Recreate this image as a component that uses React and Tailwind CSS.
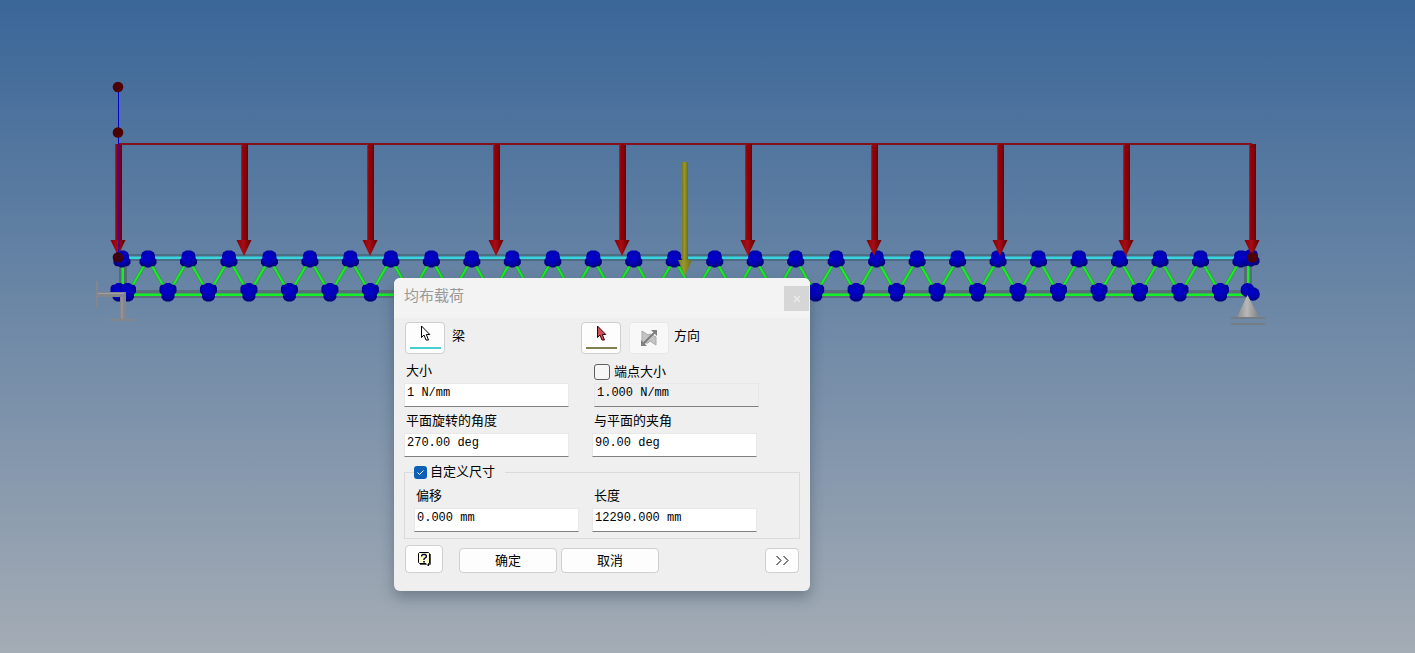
import React from "react";

const topNodes = Array.from({ length: 28 }, (_, i) => 148 + i * 40.48);
const bottomNodes = Array.from({ length: 28 }, (_, i) => 127.5 + i * 40.48);
const loads = Array.from({ length: 10 }, (_, i) => 118 + i * 126);

function TopNode({ x, y = 259 }) {
  return (
    <path
      transform={`translate(${x} ${y})`}
      d="M-2.500 -8.500H2.500L6 -6.500L7 -3V-1L8.500 1V4.500L6.500 7L3 7.500L1.500 8.500H-1.500L-3 7.500L-6.500 7L-8.500 4.500V1L-7 -1V-3L-6 -6.500Z"
      fill="url(#ball)"
    />
  );
}

function BottomNode({ x, y = 292 }) {
  return (
    <path
      transform={`translate(${x} ${y})`}
      d="M-2 -9H2L4 -7.500L7 -7L8.500 -4.500V0L6.500 2.500V5.500L5 8L2 9.500H-2L-5 8L-6.500 5.500V2.500L-8.500 0V-4.500L-7 -7L-4 -7.500Z"
      fill="url(#ball)"
    />
  );
}

function ArrowHead({ x }) {
  return <path d={`M${x - 7.5} 240H${x + 7.5}L${x} 256Z`} fill="url(#head)" />;
}

function Scene() {
  return (
    <svg
      viewBox="0 0 1415 653"
      preserveAspectRatio="xMinYMin meet"
      className="absolute inset-0 w-full"
      aria-hidden="true"
    >
      <defs>
        <radialGradient id="ball" cx="0.45" cy="0.4" r="0.6">
          <stop offset="0" stopColor="#0000d0" />
          <stop offset="0.6" stopColor="#0000b4" />
          <stop offset="1" stopColor="#000078" />
        </radialGradient>
        <linearGradient id="shaft">
          <stop offset="0" stopColor="#a82830" />
          <stop offset="0.25" stopColor="#940004" />
          <stop offset="0.7" stopColor="#840004" />
          <stop offset="1" stopColor="#600410" />
        </linearGradient>
        <linearGradient id="head">
          <stop offset="0" stopColor="#840004" />
          <stop offset="0.45" stopColor="#a80c14" />
          <stop offset="1" stopColor="#600004" />
        </linearGradient>
        <linearGradient id="olive">
          <stop offset="0" stopColor="#77771c" />
          <stop offset="0.4" stopColor="#98982a" />
          <stop offset="1" stopColor="#6c6c1c" />
        </linearGradient>
        <linearGradient id="cone">
          <stop offset="0" stopColor="#8c8c90" />
          <stop offset="0.45" stopColor="#b8b8b8" />
          <stop offset="1" stopColor="#808084" />
        </linearGradient>
      </defs>

      {/* chords and end posts */}
      <rect x="120" y="254" width="1130" height="7" fill="#4c6e84" />
      <rect x="120" y="256.500" width="1130" height="2.500" fill="#38d4e0" />
      <rect x="120" y="290" width="1130" height="8" fill="#5a6e7c" />
      <rect x="120" y="293.500" width="1130" height="2.500" fill="#14f028" />
      <rect x="119" y="262" width="8" height="28" fill="#546c74" />
      <rect x="121.500" y="262" width="2.500" height="28" fill="#14f028" />
      <rect x="1244" y="262" width="8" height="28" fill="#546c74" />
      <rect x="1247" y="262" width="2.500" height="28" fill="#14f028" />

      {/* diagonals */}
      {topNodes.map((x, i) => (
        <g key={i}>
          <path d={`M${bottomNodes[i]} 294L${x} 259`} stroke="#3c8a50" strokeWidth="3.400" />
          <path d={`M${bottomNodes[i]} 294L${x} 259`} stroke="#14f020" strokeWidth="2.200" />
          {i < 27 && (
            <>
              <path d={`M${x} 259L${bottomNodes[i + 1]} 294`} stroke="#3c8a50" strokeWidth="3.400" />
              <path d={`M${x} 259L${bottomNodes[i + 1]} 294`} stroke="#14f020" strokeWidth="2.200" />
            </>
          )}
        </g>
      ))}

      <rect x="118" y="143" width="1134" height="2" fill="#84101c" />
      {loads.map((x) => (
        <rect key={x} x={x - 3} y="144" width="7" height="97" fill="url(#shaft)" />
      ))}

      <TopNode x={122} />
      {topNodes.map((x, i) => (
        <TopNode key={i} x={x} />
      ))}
      <TopNode x={1251} y={258} />
      <BottomNode x={119} />
      {bottomNodes.slice(0, 28).map((x, i) => (
        <BottomNode key={i} x={x} />
      ))}
      <circle cx="1247.500" cy="290" r="7" fill="url(#ball)" />
      <circle cx="1253" cy="294" r="6.800" fill="url(#ball)" />
      {loads.map((x) => (
        <ArrowHead key={x} x={x} />
      ))}

      {/* load direction */}
      <rect x="682" y="162" width="6" height="99" rx="1" fill="url(#olive)" />
      <path d="M678 260H692L685 276Z" fill="url(#olive)" />

      {/* handles of the load plane */}
      <path d="M118.500 87V258" stroke="#0000cc" />
      <path d="M119 144V250" stroke="#500080" strokeWidth="2" />
      <circle cx="118" cy="87" r="5.300" fill="#4c0000" />
      <circle cx="118" cy="132.500" r="5.300" fill="#4c0000" />
      <circle cx="118" cy="257.500" r="5.300" fill="#3c0010" />
      <circle cx="1252.500" cy="257.500" r="5.300" fill="#4c0004" />

      {/* fixed support */}
      <g fill="#84868c">
        <rect x="96" y="281" width="2" height="27" />
        <rect x="98" y="292" width="28" height="5" />
        <rect x="120" y="294" width="6" height="26" />
        <rect x="109" y="319" width="27" height="2" />
      </g>
      <path d="M98 293.500H124M122 297V319" fill="none" stroke="#a0a0a6" />

      {/* sliding support */}
      <path d="M1247.500 295L1259 317Q1248 320 1237 317Z" fill="url(#cone)" />
      <rect x="1231" y="317" width="34" height="2" fill="#747c86" />
      <rect x="1231" y="323" width="34" height="2" fill="#747c86" />
    </svg>
  );
}

function PointerIcon({ fill, stroke }) {
  return (
    <svg width="12" height="17" viewBox="0 0 12 17" aria-hidden="true">
      <path
        d="M2.500 1V12.500L5 10L7 15H9.500L7.300 9.500H10.800Z"
        fill={fill}
        stroke={stroke}
      />
    </svg>
  );
}

function FlipIcon() {
  return (
    <svg width="18" height="18" viewBox="0 0 18 18" aria-hidden="true">
      <path d="M2 2L8 6L10 5L16 8V16L10 12L8 14H2Z" fill="#c4c4c4" stroke="#a8a8a8" />
      <path d="M2 16L16 2" stroke="#7c7c7c" strokeWidth="1.800" />
      <path d="M11 1H17V7Z M1 11V17H7Z" fill="#808080" />
    </svg>
  );
}

function HelpIcon() {
  return (
    <svg width="15" height="16" viewBox="0 0 15 16" aria-hidden="true">
      <path
        d="M2.500 1.500H11.500L12.500 2.500V12.500H11.500V15L9 12.500H2.500L1.500 11.500V2.500Z"
        fill="#ffffd0"
        stroke="#000"
      />
      <path d="M13.500 3V13.500H12M3 13.500H9" stroke="#505050" fill="none" />
      <path
        d="M4.700 5.500V4.500L5.700 3.500H8.300L9.300 4.500V6L7 8V9"
        fill="none"
        stroke="#00003c"
        strokeWidth="1.400"
      />
      <rect x="6.200" y="10" width="1.700" height="1.500" fill="#00003c" />
    </svg>
  );
}

const button =
  "flex items-center justify-center rounded border border-[#cfcfcf] bg-[#fdfdfd]";

function ValueInput({ id, defaultValue, disabled, label }) {
  return (
    <input
      id={id}
      type="text"
      aria-label={label}
      defaultValue={defaultValue}
      disabled={disabled}
      className="h-6 w-[165px] border border-[#e8e8e8] border-b-[#808080] bg-white px-[2px] pb-1 font-['Liberation_Mono','Noto_Sans_CJK_SC',monospace] text-[12px] text-black disabled:bg-[#efefef]"
    />
  );
}

function Field({ id, label, defaultValue }) {
  return (
    <div className="flex w-[165px] flex-col">
      <label htmlFor={id} className="h-[22px] pl-[2px] leading-[18px]">
        {label}
      </label>
      <ValueInput id={id} defaultValue={defaultValue} />
    </div>
  );
}

function LoadDialog() {
  return (
    <section
      aria-label="均布载荷"
      className="absolute top-[278px] left-[394px] w-[416px] rounded-md bg-[#efefef] pb-[18px] text-[13px] text-black shadow-[0_6px_14px_rgba(30,45,60,0.35)]"
    >
      <header className="flex h-10 items-start justify-between rounded-t-md bg-[#f3f3f3] pr-px pl-[10px]">
        <h1 className="pt-[6px] text-[15px] leading-[22px] text-[#999]">均布载荷</h1>
        <button
          type="button"
          aria-label="关闭"
          className="mt-2 flex h-[25px] w-[25px] items-center justify-center bg-[#d6d6d6]"
        >
          <svg width="8" height="8" viewBox="0 0 8 8" aria-hidden="true">
            <path d="M1 1L7 7M7 1L1 7" stroke="#ececec" strokeWidth="1.200" />
          </svg>
        </button>
      </header>

      <form className="px-[10px]" onSubmit={(e) => e.preventDefault()}>
        <div className="flex h-[42px] pt-1">
          <div className="flex w-[177px] gap-[7px] pl-px">
            <button
              type="button"
              aria-label="选择梁"
              className={`${button} h-8 w-10 flex-col gap-[5px] pb-[2px]`}
            >
              <PointerIcon fill="#fff" stroke="#000" />
              <span className="h-[2px] w-[31px] bg-[#48d0d0]" />
            </button>
            <span className="leading-[26px]">梁</span>
          </div>
          <div className="flex gap-2">
            <button
              type="button"
              aria-label="选择方向"
              className={`${button} h-8 w-10 flex-col gap-[5px] pb-[2px]`}
            >
              <PointerIcon fill="#d05058" stroke="#400008" />
              <span className="h-[2px] w-[31px] bg-[#808050]" />
            </button>
            <button
              type="button"
              aria-label="反向"
              disabled
              className="flex h-8 w-10 items-center justify-center rounded border border-[#e8e8e8] bg-[#f8f8f8]"
            >
              <FlipIcon />
            </button>
            <span className="-ml-[3px] leading-[26px]">方向</span>
          </div>
        </div>

        <div className="flex gap-[25px] pt-px">
          <Field id="size" label="大小" defaultValue="1 N/mm" />
          <div className="flex flex-col">
            <label className="flex h-[22px] gap-1 leading-[20px]">
              <input
                type="checkbox"
                className="mt-[3px] h-4 w-4 appearance-none rounded-[3px] border border-[#606060] bg-[#f6f6f6]"
              />
              端点大小
            </label>
            <ValueInput label="端点大小" defaultValue="1.000 N/mm" disabled />
          </div>
        </div>

        <div className="flex gap-[23px] pt-1">
          <Field id="plane" label="平面旋转的角度" defaultValue="270.00 deg" />
          <Field id="angle" label="与平面的夹角" defaultValue="90.00 deg" />
        </div>

        <fieldset className="mt-[6px] border border-[#dadada] pb-[6px] pl-[9px]">
          <legend className="pr-[10px]">
            <label className="flex gap-[3px] leading-[16px]">
              <span className="relative mt-[3px] mb-[2px] flex h-[13px] w-[13px]">
                <input
                  type="checkbox"
                  defaultChecked
                  className="h-[13px] w-[13px] appearance-none rounded-[3px] bg-[#0c5fb4]"
                />
                <svg
                  viewBox="0 0 13 13"
                  className="pointer-events-none absolute inset-0"
                  aria-hidden="true"
                >
                  <path d="M3.500 6.500L5.500 8.500L9.500 4.500" fill="none" stroke="#fff" />
                </svg>
              </span>
              自定义尺寸
            </label>
          </legend>
          <div className="flex gap-[13px] pt-[5px]">
            <Field id="offset" label="偏移" defaultValue="0.000 mm" />
            <Field id="length" label="长度" defaultValue="12290.000 mm" />
          </div>
        </fieldset>

        <div className="flex items-center pt-[5px] pl-px">
          <button
            type="button"
            aria-label="帮助"
            className={`${button} h-7 w-[38px]`}
          >
            <HelpIcon />
          </button>
          <button type="submit" className={`${button} mt-1 ml-4 h-[25px] w-[98px] pb-[2px]`}>
            确定
          </button>
          <button type="button" className={`${button} mt-1 ml-1 h-[25px] w-[98px] pb-[2px]`}>
            取消
          </button>
          <button
            type="button"
            aria-label="更多"
            className={`${button} mt-1 mr-px ml-auto h-[25px] w-[34px]`}
          >
            <svg width="15" height="11" viewBox="0 0 15 11" aria-hidden="true">
              <path d="M1.500 1L6 5.500L1.500 10M8.500 1L13 5.500L8.500 10" fill="none" stroke="#000" />
            </svg>
          </button>
        </div>
      </form>
    </section>
  );
}

export default function App() {
  return (
    <main className="relative min-h-screen overflow-hidden bg-linear-to-b/srgb from-[#3a6698] to-[#a4acb5] font-['Noto_Sans_CJK_SC',sans-serif]">
      <Scene />
      <LoadDialog />
    </main>
  );
}
